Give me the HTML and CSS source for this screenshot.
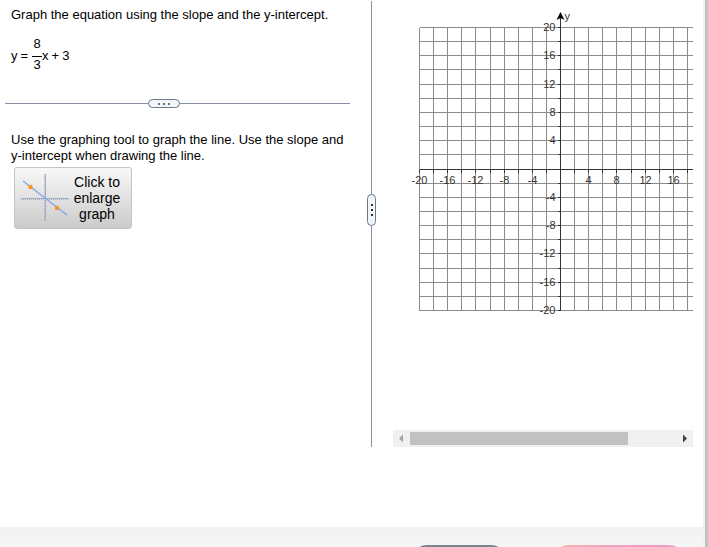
FILE: index.html
```html
<!DOCTYPE html>
<html lang="en">
<head>
  <meta charset="UTF-8" />
  <title>Graph the equation</title>
  <link rel="stylesheet" href="styles.css">
</head>
<body>
  <div class="page">
    <main class="exercise">
      <section class="question">
        <p class="prompt">Graph the equation using the slope and the y-intercept.</p>
        <div class="equation">
          <span>y</span><span class="operator">=</span>
          <span class="fraction"><span class="numerator">8</span><span class="denominator">3</span></span>
          <span>x</span><span class="operator">+</span><span>3</span>
        </div>
        <div class="separator">
          <button class="handle" type="button" aria-label="Collapse question"><i></i><i></i><i></i></button>
        </div>
        <p class="instructions">Use the graphing tool to graph the line. Use the slope and y-intercept when drawing the line.</p>
        <button class="enlarge" type="button">
          <svg width="48" height="50" viewBox="0 0 48 50" aria-hidden="true">
            <path d="M0 25.5H48M24.5 1V48" stroke="#a3aebf" fill="none" />
            <path d="M0 26.5H48M23.5 1V48" stroke="#a4afbf" stroke-dasharray="1 1" fill="none" />
            <path d="M2 8L46 42" stroke="#7ea6e8" stroke-width="1.3" fill="none" />
            <circle cx="9.5" cy="14" r="2.2" fill="#f7941e" />
            <circle cx="36" cy="35" r="2.2" fill="#f7941e" />
          </svg>
          <span>Click to enlarge graph</span>
        </button>
      </section>

      <div class="divider">
        <button class="handle handle-vertical" type="button" aria-label="Resize panes"><i></i><i></i><i></i></button>
      </div>

      <section class="graph-pane">
        <div class="graph-view">
          <svg id="graph" width="366" height="430" role="img" aria-label="Coordinate grid from -20 to 20"></svg>
        </div>
        <div class="scrollbar">
          <button class="arrow" type="button" aria-label="Scroll left">
            <svg width="17" height="17" viewBox="0 0 17 17"><path d="M10 4.5V12.5L6 8.5Z" fill="#a3a3a3" /></svg>
          </button>
          <div class="track"><div class="thumb"></div></div>
          <button class="arrow" type="button" aria-label="Scroll right">
            <svg width="17" height="17" viewBox="0 0 17 17"><path d="M7 4.5V12.5L11 8.5Z" fill="#404040" /></svg>
          </button>
        </div>
      </section>
    </main>
    <footer class="actions">
      <button class="action action-secondary" type="button" aria-label="Clear all"></button>
      <button class="action action-primary" type="button" aria-label="Check answer"></button>
    </footer>
  </div>
  <div class="page-scrollbar"></div>

  <script>
    const gridLeft = 26.5;
    const gridTop = 27.5;
    const width = 282;
    const height = 283;
    const cells = 20;
    const ns = "http://www.w3.org/2000/svg";
    const graph = document.getElementById("graph");

    function xAt(i) {
      return gridLeft + Math.round(i * width / cells);
    }

    function yAt(i) {
      return gridTop + Math.round(i * height / cells);
    }

    function path(d, cls) {
      const el = document.createElementNS(ns, "path");
      el.setAttribute("d", d);
      el.setAttribute("class", cls);
      graph.appendChild(el);
    }

    function label(text, x, y, cls) {
      const el = document.createElementNS(ns, "text");
      el.setAttribute("x", x);
      el.setAttribute("y", y);
      el.setAttribute("class", cls);
      el.textContent = text;
      graph.appendChild(el);
    }

    const midX = xAt(10);
    const midY = yAt(10);
    const right = xAt(cells);
    const bottom = yAt(cells);
    let grid = "";
    let ticks = "";
    for (let i = 0; i <= cells; i++) {
      grid += `M${xAt(i)} ${gridTop}V${bottom}M${gridLeft} ${yAt(i)}H${right}`;
      ticks += `M${xAt(i)} ${midY}v3M${midX} ${yAt(i)}h-3`;
    }
    path(grid, "grid-line");
    path(ticks, "axis");
    path(`M${gridLeft} ${midY}H${right + 12}M${midX} 16V${bottom}`, "axis");
    path(`M${midX} 12L${midX + 4} 20L${midX} 18L${midX - 4} 20Z`, "axis-arrow");

    for (let i = 0; i <= cells; i += 2) {
      const value = -20 + i * 2;
      if (value === 0) continue;
      if (i < cells) label(value, xAt(i), midY + 14, "label label-x");
      label(-value, midX - 5, yAt(i) + 3, "label label-y");
    }
    label("y", midX + 4, 20, "label");
  </script>
</body>
</html>
```
FILE: styles.css
```css
* {
  box-sizing: border-box;
}
body {
  margin: 0;
  display: flex;
  height: 100vh;
  overflow: hidden;
  font-family: "Liberation Sans", Arial, sans-serif;
  font-size: 13px;
  line-height: 16px;
  color: #000;
  background-color: #fff;
}
button {
  font: inherit;
  color: inherit;
  padding: 0;
  border: none;
  background: none;
  cursor: pointer;
}
p {
  margin: 0;
}
.page {
  flex: 1;
  min-width: 0;
  overflow: hidden;
}
.page-scrollbar {
  width: 5px;
  background-color: #c1c1c1;
  border-left: 2px solid #f0f0f0;
}
.exercise {
  display: grid;
  grid-template-columns: minmax(0, 345fr) 9px minmax(0, 300fr);
  column-gap: 17px;
  padding: 0 10px 80px 5px;
}
.prompt {
  padding: 7px 0 0 6px;
}
.equation {
  display: flex;
  align-items: center;
  padding: 13px 0 0 6px;
}
.operator {
  margin: 0 3px;
}
.fraction {
  display: flex;
  flex-direction: column;
  align-items: center;
  width: 10px;
  margin-left: 1px;
  padding-bottom: 3px;
}
.numerator {
  padding-bottom: 4px;
}
.denominator {
  width: 100%;
  text-align: center;
  border-top: 1px solid #000;
}
.separator {
  display: flex;
  justify-content: center;
  margin-top: 23px;
  padding-right: 28px;
  background: linear-gradient(#8791a3, #8791a3) 0 4px / 100% 1px no-repeat;
}
.handle {
  display: flex;
  align-items: center;
  justify-content: center;
  gap: 3px;
  width: 32px;
  height: 9px;
  border: 1px solid #6c7a8c;
  border-radius: 5px;
  background-color: #f3f6f8;
}
.handle i {
  width: 2px;
  height: 2px;
  background-color: #6a7480;
}
.handle-vertical {
  flex-direction: column;
  width: 9px;
  height: 32px;
}
.handle-vertical i {
  background-color: #333;
}
.instructions {
  padding: 24px 0 3px 6px;
}
.enlarge {
  display: flex;
  align-items: center;
  width: 118px;
  height: 62px;
  margin-left: 9px;
  padding-left: 6px;
  border: 1px solid #c4c4c4;
  border-radius: 3px;
  background: linear-gradient(#f8f8f8, #cbcbcb);
  font-size: 14px;
}
.enlarge span {
  flex: 1;
  padding-right: 6px;
}
.divider {
  display: flex;
  align-items: center;
  margin-top: 1px;
  padding-bottom: 28px;
  background: linear-gradient(#8791a3, #8791a3) 4px 0 / 1px 100% no-repeat;
}
.graph-view {
  overflow: hidden;
}
.graph-view svg,
.arrow svg {
  display: block;
}
.grid-line,
.axis {
  fill: none;
  stroke: #8c8c8c;
  shape-rendering: crispEdges;
}
.axis {
  stroke: #333;
}
.axis-arrow {
  fill: #000;
}
.label {
  font-size: 11px;
  fill: #333;
}
.label-x {
  text-anchor: middle;
}
.label-y {
  text-anchor: end;
}
.scrollbar {
  display: flex;
  height: 17px;
  background-color: #f0f0f0;
}
.track {
  flex: 1;
  padding: 2px 0;
}
.thumb {
  width: 82%;
  height: 13px;
  background-color: #c1c1c1;
}
.actions {
  display: flex;
  justify-content: flex-end;
  gap: 46px;
  padding: 18px 18px 18px 0;
  background: linear-gradient(#f1f1f1, #f6f6f6 20px);
}
.action {
  height: 32px;
  border-radius: 16px;
}
.action-secondary {
  width: 96px;
  background-color: #7b8290;
}
.action-primary {
  width: 132px;
  background: linear-gradient(90deg, #f8b4ac, #f09ac6 60%);
}
```
